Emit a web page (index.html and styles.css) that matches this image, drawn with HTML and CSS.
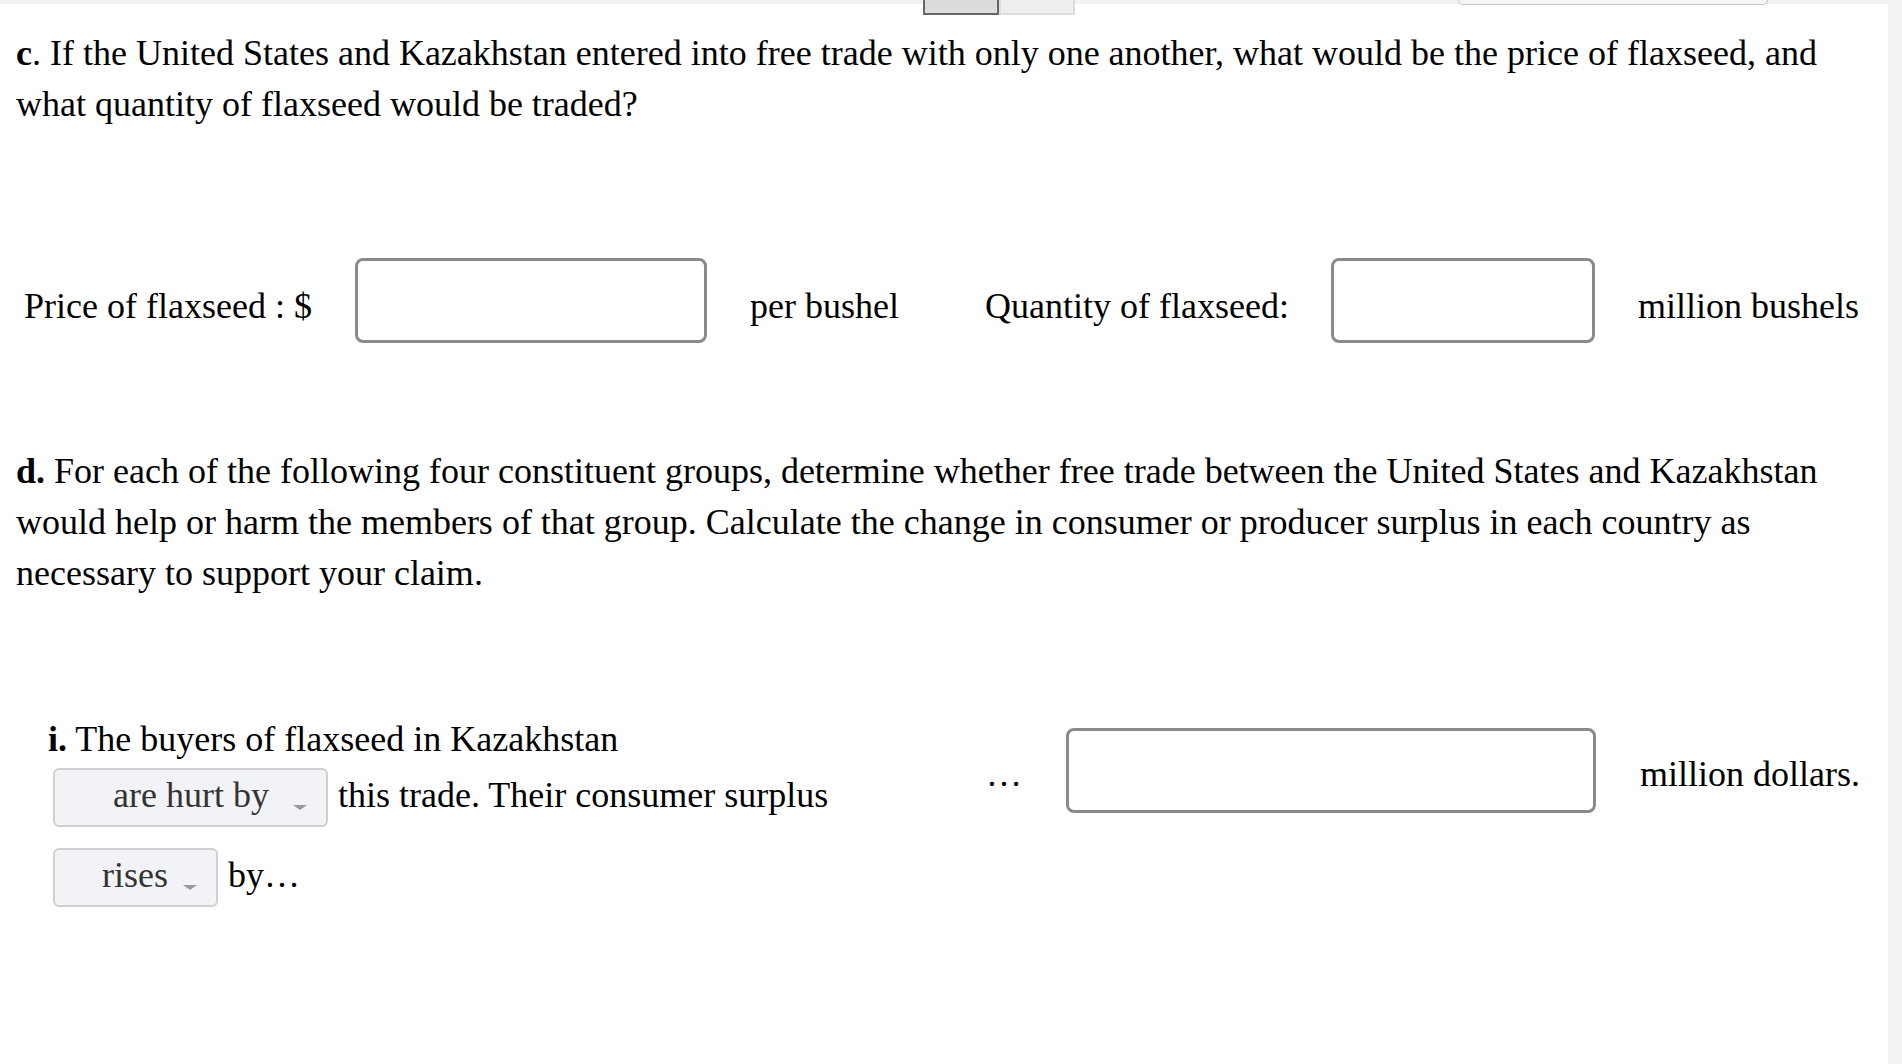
FILE: index.html
```html
<!DOCTYPE html>
<html>
  <head>
    <meta charset="UTF-8">
    <title>Flaxseed trade</title>
    <link rel="stylesheet" href="styles.css">
  </head>
  <body>
    <div class="page">
      <div class="topbar">
        <div class="tabs">
          <span class="tab tab-active"></span>
          <span class="tab"></span>
        </div>
        <span class="panel-edge"></span>
      </div>

      <p class="question question-c"><b>c</b>. If the United States and Kazakhstan entered into free trade with only one another, what would be the price of flaxseed, and what quantity of flaxseed would be traded?</p>

      <div class="answer-row">
        <span class="answer-text label-price">Price of flaxseed : $</span>
        <span class="answer-box box-price"></span>
        <span class="answer-text unit-price">per bushel</span>
        <span class="answer-text label-quantity">Quantity of flaxseed:</span>
        <span class="answer-box box-quantity"></span>
        <span class="answer-text unit-quantity">million bushels</span>
      </div>

      <p class="question question-d"><b>d.</b> For each of the following four constituent groups, determine whether free trade between the United States and Kazakhstan would help or harm the members of that group. Calculate the change in consumer or producer surplus in each country as necessary to support your claim.</p>

      <div class="part">
        <div class="part-left">
          <p class="part-title"><b>i.</b> The buyers of flaxseed in Kazakhstan</p>
          <div class="choice-row">
            <span class="dropdown dropdown-effect">are hurt by<span class="caret"></span></span>
            <span class="choice-text">this trade. Their consumer surplus</span>
          </div>
          <div class="choice-row choice-row-next">
            <span class="dropdown dropdown-direction">rises<span class="caret"></span></span>
            <span class="choice-text">by…</span>
          </div>
        </div>
        <div class="part-right">
          <span class="answer-text answer-low">…</span>
          <span class="answer-box box-surplus"></span>
          <span class="answer-text answer-low">million dollars.</span>
        </div>
      </div>
    </div>
    <div class="gutter"></div>
  </body>
</html>
```

FILE: styles.css
```css
*
{
  box-sizing: border-box;
}

body
{
  margin: 0;
  display: flex;
  min-height: 1064px;
  font-family: "Liberation Serif", "Times New Roman", serif;
  font-size: 36px;
  color: #000;
  background: #fff;
}

.page
{
  flex: 1;
}

.gutter
{
  width: 14px;
  background: #f2f2f2;
}

/* strip of the toolbar that scrolled above */
.topbar
{
  height: 4px;
  background: #f2f2f2;
  display: flex;
  align-items: flex-start;
}

.tabs
{
  display: flex;
  margin-left: 923px;
}

.tab
{
  width: 76px;
  height: 15px;
  background: #eeeeee;
  border: 2px solid #dddddd;
  border-top: none;
}

.tab-active
{
  background: #dcdcdc;
  border-color: #666666;
}

.panel-edge
{
  margin-left: 383px;
  width: 310px;
  height: 5px;
  background: #f5f5f5;
  border: 1.5px solid #c4c4c4;
  border-top: none;
  border-radius: 0 0 6px 6px;
}

.question
{
  margin: 0;
  padding: 0 28px 0 16px;
  line-height: 51px;
}

.question-c
{
  margin-top: 23.5px;
}

.question-d
{
  margin-top: 102.5px;
}

.answer-row
{
  display: flex;
  align-items: center;
  margin-top: 128.5px;
  padding-left: 24px;
}

.answer-text
{
  line-height: 51px;
  white-space: nowrap;
}

.answer-row .answer-text
{
  padding-top: 12px;
}

.label-price
{
  width: 331px;
}

.unit-price
{
  width: 235px;
  margin-left: 43px;
}

.label-quantity
{
  width: 346px;
}

.unit-quantity
{
  margin-left: 43px;
}

.answer-box
{
  display: block;
  flex: none;
  height: 85px;
  background: #fff;
  border: 3px solid #8a8a8a;
  border-radius: 8px;
}

.box-price
{
  width: 352px;
}

.box-quantity
{
  width: 264px;
}

.part
{
  display: flex;
  align-items: flex-start;
  margin-top: 115px;
  padding-left: 48px;
}

.part-left
{
  width: 938px;
}

.part-title
{
  margin: 0;
  line-height: 51px;
}

.choice-row
{
  display: flex;
  align-items: baseline;
  column-gap: 10px;
  margin-top: 3.5px;
  margin-left: 5px;
}

.choice-row-next
{
  margin-top: 21px;
}

.choice-text
{
  line-height: 51px;
}

.dropdown
{
  display: inline-flex;
  align-items: baseline;
  height: 59px;
  padding: 0 19px 5px 0;
  line-height: 50px;
  color: #333;
  background: #f2f3f7;
  border: 2px solid #cfd0d4;
  border-radius: 6px;
}

.dropdown-effect
{
  width: 275px;
  padding-left: 58px;
}

.dropdown-direction
{
  width: 165px;
  padding-left: 47px;
}

.caret
{
  align-self: flex-end;
  margin: 0 0 10px auto;
  width: 0;
  height: 0;
  border-left: 7px solid transparent;
  border-right: 7px solid transparent;
  border-top: 5px solid #9a9a9a;
}

.part-right
{
  display: flex;
  align-items: center;
  margin-top: 14.5px;
}

.answer-low
{
  padding-top: 8px;
}

.box-surplus
{
  width: 530px;
  margin: 0 44px;
}
```
